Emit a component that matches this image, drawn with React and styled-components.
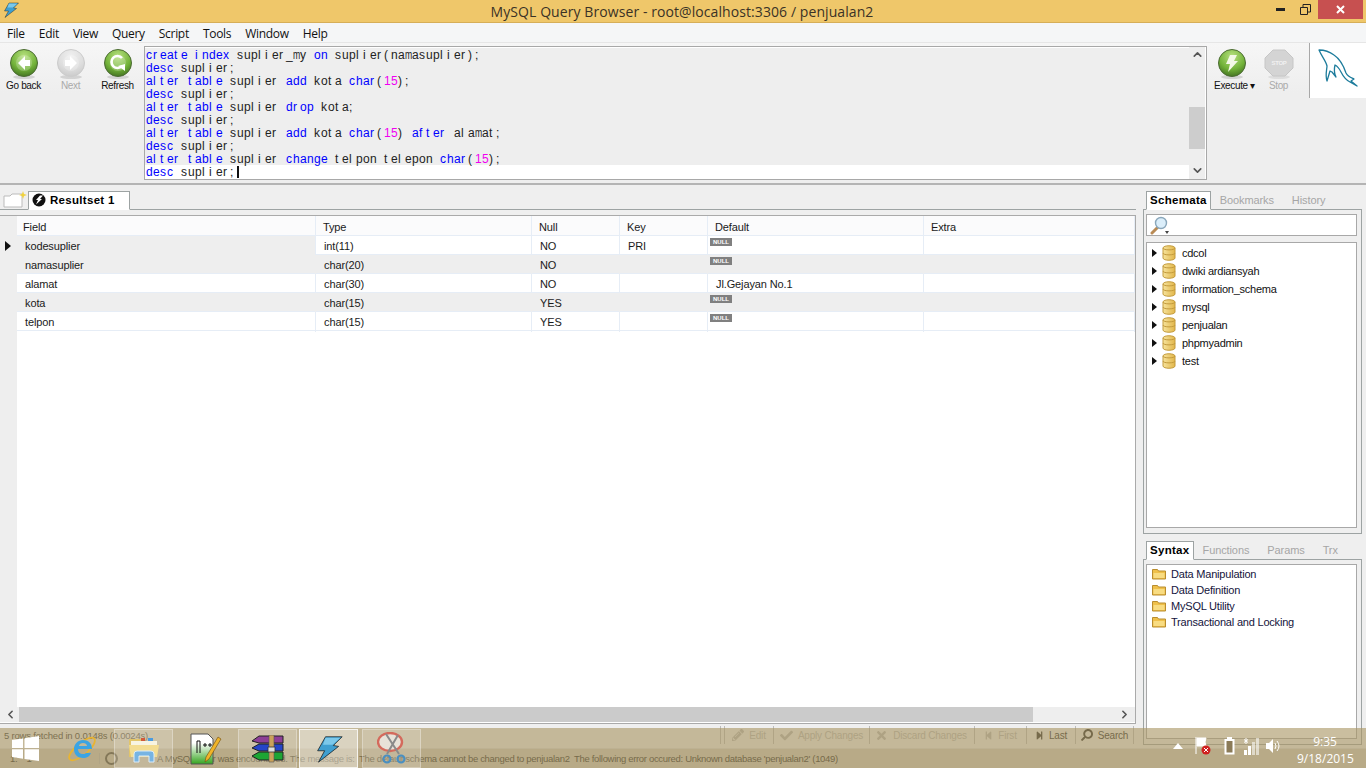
import React from 'react';
import styled, { createGlobalStyle } from 'styled-components';
import { ChevronUp, ChevronDown, ChevronLeft, ChevronRight } from 'lucide-react';
import { FaPencilAlt, FaCheck, FaTimes, FaStepBackward, FaStepForward, FaSearch } from 'react-icons/fa';

const GlobalStyle = createGlobalStyle`
    html, body { margin: 0; padding: 0; }
    body {
        font-family: "Liberation Sans", Arial, sans-serif;
        font-size: 11px;
        color: #111;
        background: #eee;
    }
    svg { display: block; }
`

const Screen = styled.div`
    position: relative;
    display: flex;
    flex-direction: column;
    width: 1366px;
    height: 768px;
    overflow: hidden;
    background: #efefef;
`

const TitleBar = styled.header`
    position: relative;
    display: flex;
    justify-content: center;
    align-items: center;
    flex: 0 0 23px;
    box-sizing: border-box;
    padding-right: 2px;
    background: #efc76a;
    border-bottom: 1px solid #d6ae58;
    font-family: "Open Sans", sans-serif;
    font-size: 14px;
    letter-spacing: 0.08px;
    color: #3a3226;
    .app-icon { position: absolute; left: 3px; top: 2px; }
`
const WindowControls = styled.div`
    position: absolute;
    right: 3px;
    top: 0;
    display: flex;
    align-items: flex-start;
`
const WinButton = styled.div`
    display: flex;
    justify-content: center;
    align-items: center;
    width: ${p => p.$w}px;
    height: 19px;
    background: ${p => p.$bg || 'transparent'};
`
const MenuBar = styled.nav`
    display: flex;
    align-items: center;
    flex: 0 0 19px;
    box-sizing: border-box;
    padding: 2px 7px 0;
    gap: 14px;
    background: #f5f6f7;
    font-family: "Open Sans", sans-serif;
    font-size: 12px;
    letter-spacing: -0.3px;
    color: #111;
`
const Toolbar = styled.section`
    display: flex;
    flex: 0 0 143px;
    box-sizing: border-box;
    background: linear-gradient(#f6f6f6, #eeeeee 50px);
    border-top: 1px solid #e6e6e6;
    border-bottom: 2px solid #b4b4b4;
`
const NavGroup = styled.div`
    display: flex;
    flex: 0 0 144px;
    align-items: flex-start;
`
const ToolButton = styled.div`
    display: flex;
    flex-direction: column;
    align-items: center;
    width: 47px;
    padding-top: 6px;
    font-size: 10px;
    letter-spacing: -0.35px;
    color: ${p => p.$off ? '#aaa' : '#111'};
    span { margin: 1px 0 0 ${p => p.$nudge || 0}px; white-space: nowrap; }
`
const Editor = styled.div`
    display: flex;
    flex: 0 0 1063px;
    box-sizing: border-box;
    height: 134px;
    margin-top: 3px;
    border: 1px solid #a8a8a8;
    background: #fff;
`
const EditorText = styled.div`
    flex: 1;
    box-sizing: border-box;
    padding-top: 1px;
    font-size: 12px;
`
const CodeLine = styled.div`
    height: 13px;
    line-height: 15px;
    padding-left: 1px;
    white-space: pre;
    background: ${p => p.$selected ? '#eeeeee' : '#fff'};
`
const Token = styled.span`
    color: ${p => ({ kw: '#0000ff', num: '#f000f0', plain: '#222' }[p.$kind])};
`
const Glyph = styled.span`
    display: inline-block;
    width: 7px;
    ${p => p.$wide && 'transform: scaleX(0.72); transform-origin: left center;'}
`
const Caret = styled.span`
    display: inline-block;
    width: 2px;
    height: 12px;
    vertical-align: -2px;
    background: #111;
`
const VScroll = styled.div`
    display: flex;
    flex-direction: column;
    align-items: center;
    justify-content: space-between;
    flex: 0 0 16px;
    margin-right: 1px;
    padding: 1px 0 2px;
    box-sizing: border-box;
    background: #eee;
    color: #555;
`
const VThumb = styled.div`
    align-self: stretch;
    height: 42px;
    margin: 43px 0 13px;
    background: #cdcdcd;
`
const RunGroup = styled.div`
    display: flex;
    flex: 0 0 102px;
    padding-left: 1px;
    box-sizing: border-box;
`
const LogoBox = styled.div`
    flex: 0 0 57px;
    box-sizing: border-box;
    height: 55px;
    background: #fff;
    border-left: 1px solid #a8a8a8;
`
const Body = styled.main`
    display: flex;
    flex: 1;
    min-height: 0;
`
const LeftColumn = styled.section`
    display: flex;
    flex-direction: column;
    flex: 0 0 1136px;
    padding-top: 6px;
    box-sizing: border-box;
    height: 559px;
`
const TabStrip = styled.div`
    display: flex;
    align-items: flex-end;
    flex: 0 0 19px;
    box-sizing: border-box;
    padding-left: 3px;
    border-bottom: 1px solid #9da3a3;
`
const NewTab = styled.div`
    flex: 0 0 25px;
    height: 18px;
`
const Tab = styled.div`
    display: flex;
    align-items: center;
    gap: 4px;
    box-sizing: border-box;
    height: 19px;
    margin-bottom: -1px;
    padding: 0 ${p => p.$active ? 3 : 8}px 2px;
    font-size: ${p => p.$active ? 11.5 : 11}px;
    white-space: nowrap;
    color: ${p => p.$active ? '#000' : '#a6a6a6'};
    font-weight: ${p => p.$active ? 700 : 400};
    letter-spacing: ${p => p.$active ? '0.3px' : '-0.1px'};
    background: ${p => p.$active ? '#fff' : 'transparent'};
    border: 1px solid ${p => p.$active ? '#9da3a3' : 'transparent'};
    border-bottom-color: ${p => p.$active ? '#fff' : 'transparent'};
`
const ResultTab = styled(Tab)`
    width: 102px;
`
const ResultFrame = styled.div`
    display: flex;
    flex-direction: column;
    flex: 1;
    margin-top: 5px;
    border-top: 1px solid #aaa;
    border-right: 1px solid #aaa;
    border-bottom: 1px solid #aaa;
    background: #fff;
    min-height: 0;
`
const Table = styled.div`
    flex: 1;
    background: linear-gradient(90deg, #eeeeee 17px, #fff 17px);
`
const Row = styled.div`
    display: grid;
    grid-template-columns: 17px 299px 216px 88px 88px 216px 1fr;
    height: ${p => p.$head ? 20 : 19}px;
    line-height: ${p => p.$head ? 22 : 20}px;
    box-sizing: border-box;
    letter-spacing: -0.12px;
    border-bottom: 1px solid #e6edf6;
    background: ${p => p.$head ? '#fbfbfc' : p.$shade ? '#eeeeee' : 'transparent'};
`
const Cell = styled.div`
    padding-left: ${p => p.$head ? 7 : 8}px;
    white-space: nowrap;
    border-right: 1px solid ${p => p.$shade ? '#eeeeee' : '#e6edf6'};
    background: ${p => p.$picked ? '#eeeeee' : 'transparent'};
    color: #1a1a1a;
    &:nth-child(2) { padding-left: ${p => p.$head ? 6 : 8}px; }
`
const Gutter = styled.div`
    display: flex;
    align-items: center;
    justify-content: center;
    background: #eee;
`
const Pointer = styled.div`
    width: 0;
    height: 0;
    border-left: 6px solid #111;
    border-top: 5px solid transparent;
    border-bottom: 5px solid transparent;
    margin-left: -2px;
`
const NullBadge = styled.div`
    width: 22px;
    height: 8px;
    margin: 2px 0 0 -6px;
    background: #808080;
    color: #fff;
    font-size: 6px;
    line-height: 8px;
    font-weight: 700;
    letter-spacing: 0;
    text-align: center;
`
const HScroll = styled.div`
    display: flex;
    align-items: center;
    flex: 0 0 15px;
    background: #eee;
    color: #555;
    .end { margin-left: auto; margin-right: 4px; }
    .start { margin: 0 2px 0 4px; }
`
const HThumb = styled.div`
    width: 1014px;
    height: 15px;
    background: #cbcbcb;
`
const ScrollFoot = styled.div`
    flex: 0 0 1px;
    background: #fff;
`
const StatusRow = styled.div`
    display: flex;
    justify-content: space-between;
    align-items: center;
    height: 18px;
    margin-top: 2px;
    padding: 0 2px 0 4px;
    font-size: 9.500px;
    letter-spacing: -0.2px;
    color: #333;
    white-space: nowrap;
`
const ActionBar = styled.div`
    display: flex;
    height: 100%;
    border-left: 1px solid #bbb;
    padding-left: 3px;
`
const Action = styled.div`
    display: flex;
    align-items: center;
    justify-content: center;
    gap: 5px;
    box-sizing: border-box;
    width: ${p => p.$w}px;
    margin-left: ${p => p.$gap || 0}px;
    border-left: 1px solid #bbb;
    color: ${p => p.$off ? '#b5b5b5' : '#222'};
    font-size: 10px;
    &:last-child { border-right: 1px solid #bbb; }
`
const ErrorRow = styled.footer`
    display: flex;
    align-items: center;
    flex: 0 0 19px;
    border-top: 1px solid #ddd;
    background: #d0cbbf;
    white-space: pre;
    font-size: 9.500px;
    letter-spacing: -0.32px;
    color: #222;
`
const CursorPos = styled.div`
    flex: 0 0 100px;
    box-sizing: border-box;
    padding-left: 10px;
    border-right: 1px solid #bbb;
`
const ErrorText = styled.div`
    margin-left: 5px;
    display: flex;
    align-items: center;
    gap: 39px;
`
const RightColumn = styled.aside`
    display: flex;
    flex-direction: column;
    flex: 0 0 219px;
    min-width: 0;
    margin-left: 7px;
    padding-top: 6px;
`
const SideFrame = styled.div`
    display: flex;
    flex-direction: column;
    box-sizing: border-box;
    height: ${p => p.$h}px;
    gap: 6px;
    padding: 4px 4px 5px 2px;
    border: 1px solid #9da3a3;
    border-top: 0;
`
const SearchBox = styled.div`
    flex: 0 0 22px;
    box-sizing: border-box;
    padding: 1px 0 0 3px;
    background: #fff;
    border: 1px solid #a8a8a8;
`
const TreeBox = styled.div`
    flex: 1;
    padding: 1px 0 0 5px;
    background: #fff;
    border: 1px solid #a8a8a8;
`
const TreeRow = styled.div`
    display: flex;
    align-items: center;
    height: 18px;
    gap: 5px;
    letter-spacing: -0.25px;
    .name { margin-left: 1px; }
`
const TreeArrow = styled.div`
    width: 0;
    height: 0;
    border-left: 5px solid #111;
    border-top: 4px solid transparent;
    border-bottom: 4px solid transparent;
`
const SyntaxRow = styled.div`
    display: flex;
    align-items: center;
    height: 16px;
    gap: 5px;
    letter-spacing: -0.2px;
    color: #14143c;
`
const SecondTabs = styled(TabStrip)`
    margin-top: 7px;
`
const Taskbar = styled.div`
    position: absolute;
    left: 0;
    right: 0;
    bottom: 0;
    display: flex;
    align-items: stretch;
    height: 40px;
    background: rgba(170, 150, 100, 0.62);
`
const StartSlot = styled.div`
    display: flex;
    align-items: center;
    justify-content: center;
    width: ${p => p.$w}px;
`
const TaskSlot = styled.div`
    display: flex;
    align-items: center;
    justify-content: center;
    box-sizing: border-box;
    width: 59px;
    margin-left: ${p => p.$gap || 0}px;
    margin-top: 1px;
    background: ${p => p.$active ? 'rgba(255,255,255,.38)' : p.$open ? 'rgba(255,255,255,.16)' : 'transparent'};
    border: 1px solid ${p => p.$active ? 'rgba(255,255,255,.75)' : p.$open ? 'rgba(255,255,255,.3)' : 'transparent'};
`
const Tray = styled.div`
    display: flex;
    align-items: center;
    margin-left: auto;
    padding-right: 13px;
`
const TrayIcon = styled.div`
    display: flex;
    justify-content: center;
    width: ${p => p.$w}px;
    margin-bottom: 4px;
`
const Clock = styled.div`
    width: 56px;
    margin-left: 11px;
    padding-top: 3px;
    text-align: center;
    color: #fff;
    font-family: "Open Sans", sans-serif;
    font-size: 12px;
    line-height: 17px;
`

const Bolt = ({ size = 16 }) => (
    <svg className="app-icon" width={size} height={size} viewBox="0 0 32 32">
        <path d="M12 2h19L21 12l6 1L4 31l7-13H3z" fill="#3f9fd0" stroke="#111" strokeWidth=".8" />
        <path d="M12 3h17l-9 8H9z" fill="#7cc8ea" />
    </svg>
)
const TaskBolt = () => (
    <svg width="28" height="28" viewBox="0 0 32 32">
        <path d="M12 2h19L21 12l6 1L4 31l7-13H3z" fill="#3f9fd0" stroke="#111" strokeWidth=".8" />
        <path d="M12 3h17l-9 8H9z" fill="#7cc8ea" />
    </svg>
)

const Dome = ({ id, off }) => (
    <>
        <defs>
            <radialGradient id={id} cx="50%" cy="25%" r="80%">
                <stop offset="0" stopColor={off ? '#f0f0f0' : '#b7e07f'} />
                <stop offset=".6" stopColor={off ? '#dddddd' : '#72b239'} />
                <stop offset="1" stopColor={off ? '#c8c8c8' : '#3d6b1e'} />
            </radialGradient>
        </defs>
        <ellipse cx="15" cy="28" rx="11" ry="2" fill="#000" opacity=".12" />
        <circle cx="15" cy="14" r="13.5" fill={`url(#${id})`} stroke={off ? '#ccc' : '#4c6b34'} />
    </>
)

const ArrowIcon = ({ id, off, flip }) => (
    <svg width="30" height="30" viewBox="0 0 30 30">
        <Dome id={id} off={off} />
        <circle cx="15" cy="14" r="8" fill="#fff" opacity=".22" />
        <path d={flip ? 'M14 7l7 7-7 7v-4H9v-6h5z' : 'M16 7l-7 7 7 7v-4h5v-6h-5z'} fill="#fff" />
    </svg>
)
const RefreshIcon = () => (
    <svg width="30" height="30" viewBox="0 0 30 30">
        <Dome id="refresh-dome" />
        <circle cx="15" cy="14" r="8" fill="#fff" opacity=".22" />
        <path d="M19 9a6 6 0 1 0 0 8" fill="none" stroke="#fff" strokeWidth="2.6" />
        <path d="M15 17l7-2v7z" fill="#fff" />
    </svg>
)
const ExecuteIcon = () => (
    <svg width="30" height="30" viewBox="0 0 30 30">
        <Dome id="execute-dome" />
        <path d="M13 6h7l-3 6h4L11 23l2-8H9z" fill="#f2f8e6" />
    </svg>
)
const StopIcon = () => (
    <svg width="30" height="30" viewBox="0 0 30 30">
        <ellipse cx="15" cy="28" rx="11" ry="2" fill="#000" opacity=".08" />
        <path d="M9 1h12l8 8v10l-8 8H9l-8-8V9z" fill="#d4d4d4" stroke="#c6c6c6" />
        <text x="15" y="16" fontSize="6" fontWeight="700" textAnchor="middle" fill="#f1f1f1">STOP</text>
    </svg>
)
const Dolphin = () => (
    <svg width="56" height="54" viewBox="0 0 56 54">
        <path d="M9 7C14 7 20 9 24 12C30 16 34 24 36 30C38 34 42 35 44 36L41 38L47 43L40 39C36 37 33 33 31 29C29 25 27 23 25 22C24 26 24 30 26 34L22 29L20 28L17 38C15 32 17 26 17 23C16 18 12 14 9 7Z" fill="none" stroke="#1d7c9c" strokeWidth="1.3" strokeLinejoin="round" />
    </svg>
)
const NewTabIcon = () => (
    <svg width="24" height="18" viewBox="0 0 24 18">
        <path d="M1 16V5h6l2-2h10v13z" fill="#fff" stroke="#bbb" />
        <path d="M20 0l1 3 3 1-3 1-1 3-1-3-3-1 3-1z" fill="#f0d23c" />
    </svg>
)
const ResultIcon = () => (
    <svg width="14" height="14" viewBox="0 0 14 14">
        <circle cx="7" cy="7" r="6.5" fill="#111" />
        <path d="M8 2.5h3L8 6h2l-6 5.5L6 7H4z" fill="#fff" />
    </svg>
)
const LensIcon = () => (
    <svg width="20" height="19" viewBox="0 0 20 19">
        <path d="M2 17l6-6" stroke="#b98b55" strokeWidth="3" strokeLinecap="round" />
        <circle cx="11" cy="7" r="5.5" fill="#dbeefa" stroke="#8aa7bb" strokeWidth="1.4" />
        <path d="M15 15h4l-2 3z" fill="#444" />
    </svg>
)
const Cylinder = ({ id }) => (
    <svg width="14" height="16" viewBox="0 0 14 16">
        <defs>
            <linearGradient id={id} x1="0" x2="1">
                <stop offset="0" stopColor="#f6e39c" />
                <stop offset="1" stopColor="#e2b64a" />
            </linearGradient>
        </defs>
        <path d="M1 3c0-3 12-3 12 0v10c0 3-12 3-12 0z" fill={`url(#${id})`} stroke="#c39b3d" />
        <path d="M1 3c0 2.500 12 2.500 12 0M1 8c0 2.500 12 2.500 12 0" fill="none" stroke="#c39b3d" />
    </svg>
)
const FolderIcon = () => (
    <svg width="14" height="12" viewBox="0 0 14 12">
        <path d="M.5 11V1.500h5l1 1.500h7v8z" fill="#efc04a" stroke="#b98d2e" />
        <path d="M1.500 5h11v5h-11z" fill="#f8dc82" />
    </svg>
)
const WindowsLogo = () => (
    <svg width="27" height="25" viewBox="0 0 27 25">
        <path d="M0 4l11-1.500V12H0zM12.500 2.300L27 0v12H12.500zM0 13.200h11v9.500L0 21zM12.500 13.200H27V25l-14.500-2z" fill="#fff" />
    </svg>
)
const IeLogo = () => (
    <svg width="32" height="32" viewBox="0 0 32 32">
        <ellipse cx="15" cy="17" rx="16" ry="6" transform="rotate(-40 15 17)" fill="none" stroke="#e8b432" strokeWidth="1.8" />
        <path d="M7 17h18c0-6-4-9-9-9s-9 4-9 9c0 6 4 9 9 9 4 0 7-2 8-5h-5c-1 1-2 1-3 1-3 0-5-2-5-5zm5-3c0-2 2-3 4-3s4 1 4 3z" fill="#3ba4e4" fillRule="evenodd" />
    </svg>
)
const ExplorerIcon = () => (
    <svg width="32" height="28" viewBox="0 0 32 28">
        <path d="M1 4h12l2 2h14v16H1z" fill="#e2c56a" />
        <path d="M3 6h26v4H3z" fill="#f7f4e2" />
        <path d="M13 3h4v3h-4z" fill="#d25a3a" />
        <path d="M20 3h5v3h-5z" fill="#4a9be0" />
        <path d="M1 10h30l-2 12H3z" fill="#f3dd92" />
        <path d="M6 27V19q0-3 3-3h14q3 0 3 3v8h-5v-6H11v6z" fill="#77b4e2" stroke="#dcecf8" />
    </svg>
)
const NotepadIcon = () => (
    <svg width="32" height="32" viewBox="0 0 32 32">
        <defs>
            <linearGradient id="npp-green" x1="0" x2="0" y1="0" y2="1">
                <stop offset=".3" stopColor="#fff" />
                <stop offset="1" stopColor="#35a51f" />
            </linearGradient>
        </defs>
        <path d="M1 1h17l5 5v25H1z" fill="url(#npp-green)" stroke="#555" />
        <path d="M7 20V8h3v12M13 12h4M15 10v4M18 12h4M20 10v4" fill="none" stroke="#111" />
        <path d="M16 24L28 4l3 2-12 20-4 3z" fill="#f0b429" stroke="#6b4a10" strokeWidth=".6" />
    </svg>
)
const RarIcon = () => (
    <svg width="33" height="28" viewBox="0 0 33 28">
        <path d="M1 6L8 1h24v7H8z" fill="#8d3f96" stroke="#222" />
        <path d="M1 13l7-4h24v7H8z" fill="#2545c8" stroke="#222" />
        <path d="M1 21l7-4h24v8H8z" fill="#1da534" stroke="#222" />
        <path d="M18 0h5v27h-5z" fill="#caa25a" stroke="#555" strokeWidth=".6" />
        <path d="M17 12h7v5h-7z" fill="#ddd" stroke="#333" strokeWidth=".8" />
    </svg>
)
const ScissorsIcon = () => (
    <svg width="30" height="34" viewBox="0 0 30 34">
        <ellipse cx="13" cy="10" rx="12" ry="9" fill="#e8e2d8" stroke="#d46a5c" strokeWidth="2.4" />
        <path d="M9 2l13 20M21 3L10 22" stroke="#8a8a8a" strokeWidth="2" />
        <circle cx="10" cy="27" r="3.500" fill="none" stroke="#4a8fc0" strokeWidth="2.2" />
        <circle cx="24" cy="27" r="3.500" fill="none" stroke="#4a8fc0" strokeWidth="2.2" />
    </svg>
)
const TrayFlag = () => (
    <svg width="16" height="18" viewBox="0 0 16 18">
        <path d="M1 0v17M2 1h9l-1 4 1 4H2z" fill="#fff" stroke="#fff" />
        <circle cx="11" cy="13" r="4.500" fill="#d02020" />
        <path d="M9 11l4 4M13 11l-4 4" stroke="#fff" />
    </svg>
)
const TrayBattery = () => (
    <svg width="11" height="18" viewBox="0 0 11 18">
        <path d="M3 0h5v2h2.500v15.500h-10V2H3z" fill="#fff" />
        <path d="M2.500 4h6v11.500h-6z" fill="#8b7b58" />
    </svg>
)
const TraySignal = () => (
    <svg width="16" height="18" viewBox="0 0 16 18">
        <path d="M0 13h3v5H0zM4 9h3v9H4zM8 5h3v13H8zM12 1h3v17h-3z" fill="#fff" opacity=".55" />
        <path d="M0 13h3v5H0zM4 9h3v9H4z" fill="#fff" />
        <path d="M2 1v6M0 2.500l4 3M4 2.500l-4 3" stroke="#fff" />
    </svg>
)
const TraySpeaker = () => (
    <svg width="17" height="18" viewBox="0 0 17 18">
        <path d="M1 6h3l4-4v14l-4-4H1z" fill="#fff" />
        <path d="M10 6q2 3 0 6M12 4q4 5 0 10" fill="none" stroke="#fff" />
    </svg>
)
const TrayUp = () => (
    <svg width="10" height="6" viewBox="0 0 10 6"><path d="M5 0l5 6H0z" fill="#fff" /></svg>
)

const KEYWORDS = ['create', 'index', 'on', 'desc', 'alter', 'table', 'add', 'char', 'drop', 'after', 'change']

const CODE = [
    'create index suplier_my on suplier(namasuplier);',
    'desc suplier;',
    'alter table suplier add kota char(15);',
    'desc suplier;',
    'alter table suplier drop kota;',
    'desc suplier;',
    'alter table suplier add kota char(15) after alamat;',
    'desc suplier;',
    'alter table suplier change telpon telepon char(15);',
    'desc suplier;',
]

const tokenKind = word => {
    if (KEYWORDS.includes(word)) return 'kw'
    if (/^\d+$/.test(word)) return 'num'
    return 'plain'
}

const Code = ({ text }) =>
    text.split(/(\w+)/).filter(Boolean).map((word, i) => (
        <Token key={i} $kind={tokenKind(word)}>
            {word.split('').map((ch, j) => <Glyph key={j} $wide={ch === 'm'}>{ch === ' ' ? '\u00a0' : ch}</Glyph>)}
        </Token>
    ))

const COLUMNS = ['Field', 'Type', 'Null', 'Key', 'Default', 'Extra']
const ROWS = [
    ['kodesuplier', 'int(11)', 'NO', 'PRI', null, ''],
    ['namasuplier', 'char(20)', 'NO', '', null, ''],
    ['alamat', 'char(30)', 'NO', '', 'Jl.Gejayan No.1', ''],
    ['kota', 'char(15)', 'YES', '', null, ''],
    ['telpon', 'char(15)', 'YES', '', null, ''],
]
const SCHEMAS = ['cdcol', 'dwiki ardiansyah', 'information_schema', 'mysql', 'penjualan', 'phpmyadmin', 'test']
const SYNTAX = ['Data Manipulation', 'Data Definition', 'MySQL Utility', 'Transactional and Locking']

const App = () => (
    <Screen>
        <GlobalStyle />
        <TitleBar>
            <Bolt />
            MySQL Query Browser - root@localhost:3306 / penjualan2
            <WindowControls>
                <WinButton $w={26}><svg width="9" height="3"><path d="M0 0h9v3H0z" fill="#222" /></svg></WinButton>
                <WinButton $w={25}>
                    <svg width="11" height="11" viewBox="0 0 11 11"><path d="M.5 3.500h7v7h-7zM3 3V.5h7.500V8H8" fill="none" stroke="#222" /></svg>
                </WinButton>
                <WinButton $w={45} $bg="#c75050">
                    <svg width="9" height="9" viewBox="0 0 9 9"><path d="M1 1l7 7M8 1L1 8" stroke="#fff" strokeWidth="2" /></svg>
                </WinButton>
            </WindowControls>
        </TitleBar>
        <MenuBar>
            {['File', 'Edit', 'View', 'Query', 'Script', 'Tools', 'Window', 'Help'].map(m => <span key={m}>{m}</span>)}
        </MenuBar>
        <Toolbar>
            <NavGroup>
                <ToolButton><ArrowIcon id="back-dome" /><span>Go back</span></ToolButton>
                <ToolButton $off><ArrowIcon id="next-dome" off flip /><span>Next</span></ToolButton>
                <ToolButton><RefreshIcon /><span>Refresh</span></ToolButton>
            </NavGroup>
            <Editor>
                <EditorText>
                    {CODE.map((line, i) => (
                        <CodeLine key={i} $selected={i < 9}>
                            <Code text={line} />
                            {i === 9 && <Caret />}
                        </CodeLine>
                    ))}
                </EditorText>
                <VScroll>
                    <ChevronUp size={13} strokeWidth={3} />
                    <VThumb />
                    <ChevronDown size={13} strokeWidth={3} />
                </VScroll>
            </Editor>
            <RunGroup>
                <ToolButton $nudge={6}><ExecuteIcon /><span>Execute ▾</span></ToolButton>
                <ToolButton $off><StopIcon /><span>Stop</span></ToolButton>
            </RunGroup>
            <LogoBox><Dolphin /></LogoBox>
        </Toolbar>
        <Body>
            <LeftColumn>
                <TabStrip>
                    <NewTab><NewTabIcon /></NewTab>
                    <ResultTab $active><ResultIcon />Resultset 1</ResultTab>
                </TabStrip>
                <ResultFrame>
                    <Table>
                        <Row $head>
                            <Gutter />
                            {COLUMNS.map(c => <Cell key={c} $head>{c}</Cell>)}
                        </Row>
                        {ROWS.map((row, i) => (
                            <Row key={row[0]} $shade={i % 2 === 1}>
                                <Gutter>{i === 0 && <Pointer />}</Gutter>
                                {row.map((value, j) => (
                                    <Cell key={j} $shade={i % 2 === 1} $picked={i === 0 && j === 0}>
                                        {value === null ? <NullBadge>NULL</NullBadge> : value}
                                    </Cell>
                                ))}
                            </Row>
                        ))}
                    </Table>
                    <HScroll>
                        <ChevronLeft className="start" size={13} strokeWidth={3} />
                        <HThumb />
                        <ChevronRight className="end" size={13} strokeWidth={3} />
                    </HScroll>
                    <ScrollFoot />
                </ResultFrame>
                <StatusRow>
                    5 rows fetched in 0.0148s (0.0024s)
                    <ActionBar>
                        <Action $w={49} $off><FaPencilAlt size={12} />Edit</Action>
                        <Action $w={96} $off><FaCheck size={13} />Apply Changes</Action>
                        <Action $w={103} $off><FaTimes size={13} />Discard Changes</Action>
                        <Action $w={52} $gap={2} $off><FaStepBackward size={9} />First</Action>
                        <Action $w={49}><FaStepForward size={9} />Last</Action>
                        <Action $w={59}><FaSearch size={12} style={{ transform: 'scaleX(-1)' }} />Search</Action>
                    </ActionBar>
                </StatusRow>
            </LeftColumn>
            <RightColumn>
                <TabStrip>
                    <Tab $active>Schemata</Tab>
                    <Tab>Bookmarks</Tab>
                    <Tab>History</Tab>
                </TabStrip>
                <SideFrame $h={324}>
                    <SearchBox><LensIcon /></SearchBox>
                    <TreeBox>
                        {SCHEMAS.map(name => (
                            <TreeRow key={name}>
                                <TreeArrow />
                                <Cylinder id={`cyl-${name.replace(/\W/g, '')}`} />
                                <span className="name">{name}</span>
                            </TreeRow>
                        ))}
                    </TreeBox>
                </SideFrame>
                <SecondTabs>
                    <Tab $active>Syntax</Tab>
                    <Tab>Functions</Tab>
                    <Tab>Params</Tab>
                    <Tab>Trx</Tab>
                </SecondTabs>
                <SideFrame $h={185}>
                    <TreeBox>
                        {SYNTAX.map(name => (
                            <SyntaxRow key={name}><FolderIcon />{name}</SyntaxRow>
                        ))}
                    </TreeBox>
                </SideFrame>
            </RightColumn>
        </Body>
        <ErrorRow>
            <CursorPos>1:    1</CursorPos>
            <ErrorText>
                <svg width="13" height="13" viewBox="0 0 13 13"><circle cx="6.500" cy="6.500" r="5.500" fill="none" stroke="#444" strokeWidth="2" /></svg>
                {"A MySQL error was encountered. The message is:  The default schema cannot be changed to penjualan2  The following error occured: Unknown database 'penjualan2' (1049)"}
            </ErrorText>
        </ErrorRow>
        <Taskbar>
            <StartSlot $w={51}><WindowsLogo /></StartSlot>
            <StartSlot $w={63}><IeLogo /></StartSlot>
            <TaskSlot $open><ExplorerIcon /></TaskSlot>
            <TaskSlot $gap={3}><NotepadIcon /></TaskSlot>
            <TaskSlot $open $gap={3}><RarIcon /></TaskSlot>
            <TaskSlot $active $gap={2}><TaskBolt /></TaskSlot>
            <TaskSlot $open $gap={4}><ScissorsIcon /></TaskSlot>
            <Tray>
                <TrayIcon $w={24}><TrayUp /></TrayIcon>
                <TrayIcon $w={26}><TrayFlag /></TrayIcon>
                <TrayIcon $w={27}><TrayBattery /></TrayIcon>
                <TrayIcon $w={17}><TraySignal /></TrayIcon>
                <TrayIcon $w={26}><TraySpeaker /></TrayIcon>
                <Clock>9:35<br />9/18/2015</Clock>
            </Tray>
        </Taskbar>
    </Screen>
)

export default App;
